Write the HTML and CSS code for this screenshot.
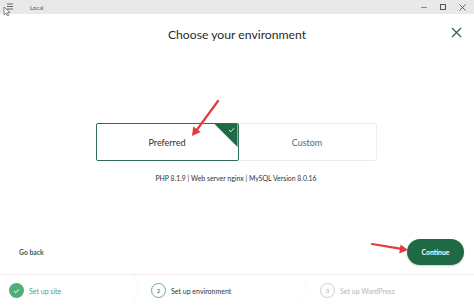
FILE: index.html
```html
<!DOCTYPE html>
<html lang="en">

<head>
    <meta charset="UTF-8">
    <title>Local</title>
    <link rel="stylesheet" href="styles.css">
</head>

<body>
    <div class="window">
        <div class="titlebar">
            <div class="menu-icon">
                <svg width="14" height="16" viewBox="0 0 14 16">
                    <path d="M7 4h6M7 6.5h6M7 9h6" stroke="#666" stroke-width="1"/>
                    <path d="M4 7l0 8 2-2 1.5 3 1.2-.6-1.4-2.8 2.8-.2z" fill="#fff" stroke="#555" stroke-width=".7"/>
                </svg>
            </div>
            <span class="app-name">Local</span>
            <div class="win-controls">
                <span class="ctl ctl-min"></span>
                <span class="ctl ctl-max"></span>
                <span class="ctl ctl-close">
                    <svg width="7" height="7" viewBox="0 0 7 7"><path d="M0.5 0.5l6 6M6.5 0.5l-6 6" stroke="#555" stroke-width="0.9"/></svg>
                </span>
            </div>
        </div>

        <div class="main">
            <button class="close-btn">
                <svg width="11" height="11" viewBox="0 0 11 11"><path d="M1 1l9 9M10 1l-9 9" stroke="#2f5e4b" stroke-width="1.2"/></svg>
            </button>

            <h1>Choose your environment</h1>

            <div class="choices">
                <div class="choice selected">
                    Preferred
                    <span class="corner">
                        <svg width="7" height="6" viewBox="0 0 7 6"><path d="M1 3l1.8 1.8L6 1.2" stroke="#fff" stroke-width="0.9" fill="none"/></svg>
                    </span>
                </div>
                <div class="choice">Custom</div>
            </div>

            <p class="versions">PHP 8.1.9 | Web server nginx | MySQL Version 8.0.16</p>

            <div class="actions">
                <a class="go-back" href="#">Go back</a>
                <button class="continue">Continue</button>
            </div>
        </div>

        <div class="stepper">
            <div class="step done">
                <span class="num">
                    <svg width="7" height="6" viewBox="0 0 7 6"><path d="M1 3l1.8 1.8L6 1.2" stroke="#fff" stroke-width="1" fill="none"/></svg>
                </span>
                <span class="label">Set up site</span>
            </div>
            <div class="step current">
                <span class="num">2</span>
                <span class="label">Set up environment</span>
            </div>
            <div class="step todo">
                <span class="num">3</span>
                <span class="label">Set up WordPress</span>
            </div>
        </div>

        <!-- annotation arrows -->
        <svg class="annotations" width="474" height="306" viewBox="0 0 474 306">
            <path d="M218 101L196 131" stroke="#e23b3b" stroke-width="2.2" stroke-linecap="round"/>
            <path d="M192 136l1.2-9.5 7.5 5.4z" fill="#e23b3b"/>
            <path d="M372 244L400 248.6" stroke="#e23b3b" stroke-width="2.2" stroke-linecap="round"/>
            <path d="M408 250l-8.8 3.6 1.4-9z" fill="#e23b3b"/>
        </svg>
    </div>
</body>

</html>
```

FILE: styles.css
```css
* {
    box-sizing: border-box;
}

body {
    margin: 0;
    font-family: Lato, "Open Sans", sans-serif;
    background-color: #fff;
    color: #333;
}

.window {
    position: relative;
    width: 474px;
    height: 306px;
    display: flex;
    flex-direction: column;
    overflow: hidden;
}

.titlebar {
    height: 14px;
    background-color: #e9e9e9;
    display: flex;
    align-items: center;
    font-size: 6px;
    color: #555;
}

.menu-icon {
    width: 14px;
    height: 14px;
    align-self: flex-start;
}

.app-name {
    margin-left: 16px;
}

.win-controls {
    margin-left: auto;
    display: flex;
    align-items: center;
    gap: 13px;
    margin-right: 8px;
}

.ctl {
    width: 7px;
    height: 7px;
    display: flex;
    align-items: center;
    justify-content: center;
}

.ctl-min::before {
    content: "";
    width: 6px;
    height: 1px;
    background-color: #888;
}

.ctl-max {
    border: 1px solid #555;
    width: 6px;
    height: 6px;
}

.main {
    position: relative;
    flex: 1;
    display: flex;
    flex-direction: column;
    align-items: center;
}

.close-btn {
    position: absolute;
    top: 13px;
    right: 12px;
    border: none;
    background: none;
    padding: 0;
    width: 11px;
    height: 11px;
    display: flex;
}

h1 {
    margin: 13px 0 0;
    font-size: 12.2px;
    line-height: 16px;
    font-weight: 400;
    color: #2a2a2a;
}

.choices {
    display: flex;
    margin-top: 80px;
    margin-left: -2px;
}

.choice {
    position: relative;
    width: 138px;
    height: 38px;
    display: flex;
    align-items: center;
    justify-content: center;
    font-size: 9px;
    color: #666;
    border: 1px solid #ececec;
    border-left: none;
    border-radius: 0 3px 3px 0;
}

.choice.selected {
    width: 143px;
    border: 1.5px solid #2f6e52;
    border-radius: 2px;
    color: #2c2c2c;
    overflow: hidden;
}

.corner {
    position: absolute;
    top: 0;
    right: 0;
    width: 23px;
    height: 23px;
    background-color: #1f6a45;
    clip-path: polygon(0 0, 100% 0, 100% 100%);
    display: flex;
    justify-content: flex-end;
    padding: 3px 3px 0 0;
}

.versions {
    margin: 12px 0 0 -2px;
    font-size: 6.9px;
    line-height: 10px;
    color: #333;
}

.actions {
    margin-top: auto;
    width: 100%;
    display: flex;
    align-items: center;
    justify-content: space-between;
    padding: 0 10px 9px 19px;
}

.go-back {
    font-size: 6.8px;
    font-weight: 700;
    color: #3c5a4b;
    text-decoration: none;
}

.continue {
    width: 57px;
    height: 26px;
    border: none;
    border-radius: 13px;
    background-color: #1f6a45;
    color: #fff;
    font-family: inherit;
    font-size: 6.8px;
    font-weight: 700;
    box-shadow: 0 1px 2px rgba(0, 0, 0, 0.2);
}

.stepper {
    height: 32px;
    border-top: 1px solid #f0f0f0;
    display: flex;
    font-size: 7px;
}

.step {
    position: relative;
    display: flex;
    align-items: center;
    gap: 5px;
}

.step::after {
    content: "";
    position: absolute;
    right: -2px;
    top: 2px;
    width: 22px;
    height: 22px;
    border-top: 1px solid #f1f1f1;
    border-right: 1px solid #f1f1f1;
    transform: scaleX(0.35) rotate(45deg);
}

.step:last-child::after {
    display: none;
}

.step.done {
    width: 143px;
    padding-left: 9px;
}

.step.current {
    width: 169px;
    padding-left: 8px;
}

.step.todo {
    flex: 1;
    padding-left: 8px;
}

.num {
    width: 15px;
    height: 15px;
    border-radius: 50%;
    display: flex;
    align-items: center;
    justify-content: center;
    font-size: 6px;
}

.done .num {
    background-color: #4fae78;
}

.done .label {
    color: #4fa474;
}

.current .num {
    border: 1px solid #5fb187;
    color: #555;
}

.current .label {
    color: #333;
}

.todo .num {
    border: 1px solid #ccc;
    color: #aaa;
}

.todo .label {
    color: #b5b5b5;
}

.annotations {
    position: absolute;
    top: 0;
    left: 0;
    pointer-events: none;
}
```
